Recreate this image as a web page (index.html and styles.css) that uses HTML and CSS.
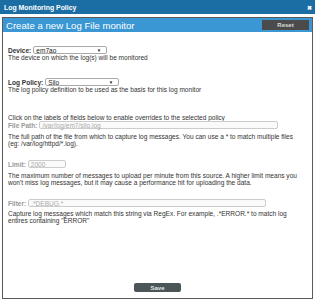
FILE: index.html
```html
<!DOCTYPE html>
<html lang="en">
<head>
    <meta charset="UTF-8">
    <title>Log Monitoring Policy</title>
    <link rel="stylesheet" href="styles.css">
</head>
<body>
    <div class="dialog">
        <div class="dialog-title">
            <span>Log Monitoring Policy</span>
            <span class="close">&#10006;</span>
        </div>

        <div class="panel">
            <div class="panel-header">
                <h1>Create a new Log File monitor</h1>
                <button class="btn reset">Reset</button>
            </div>

            <div class="panel-body">
                <div class="field top first">
                    <div class="row">
                        <label>Device:</label>
                        <div class="select device">em7ao <span class="arrow">&#9660;</span></div>
                    </div>
                    <div class="desc">The device on which the log(s) will be monitored</div>
                </div>

                <div class="field top">
                    <div class="row">
                        <label>Log Policy:</label>
                        <div class="select policy">Silo <span class="arrow">&#9660;</span></div>
                    </div>
                    <div class="desc">The log policy definition to be used as the basis for this log monitor</div>
                </div>

                <div class="hint">Click on the labels of fields below to enable overrides to the selected policy</div>

                <div class="field">
                    <div class="row">
                        <label class="off">File Path:</label>
                        <div class="input path">/var/log/em7/silo.log</div>
                    </div>
                    <div class="desc gap">The full path of the file from which to capture log messages. You can use a * to match multiple files (eg: /var/log/httpd/*.log).</div>
                </div>

                <div class="field spaced">
                    <div class="row">
                        <label class="off">Limit:</label>
                        <div class="input limit">2000</div>
                    </div>
                    <div class="desc gap">The maximum number of messages to upload per minute from this source. A higher limit means you won't miss log messages, but it may cause a performance hit for uploading the data.</div>
                </div>

                <div class="field spaced">
                    <div class="row">
                        <label class="off">Filter:</label>
                        <div class="input filter">.*DEBUG.*</div>
                    </div>
                    <div class="desc gap-sm">Capture log messages which match this string via RegEx. For example, .*ERROR.* to match log entires containing "ERROR"</div>
                </div>

                <div class="footer">
                    <button class="btn save">Save</button>
                </div>
            </div>
        </div>
    </div>
</body>
</html>
```

FILE: styles.css
```css
body {
    margin: 0;
    font-family: "Liberation Sans", Arial, sans-serif;
    background: #fff;
}

.dialog {
    width: 315px;
    height: 300px;
    display: flex;
    flex-direction: column;
}

.dialog-title {
    height: 14px;
    background: #1b6ea3;
    color: #fff;
    font-size: 6.9px;
    font-weight: bold;
    display: flex;
    align-items: center;
    justify-content: space-between;
    padding: 0 3px 0 4px;
}

.close {
    font-size: 6px;
}

.panel {
    flex: 1;
    margin: 3px 2px 1px 2px;
    border: 1px solid #5a5a5a;
    display: flex;
    flex-direction: column;
}

.panel-header {
    height: 14px;
    background: #3a97d4;
    display: flex;
    align-items: center;
    justify-content: space-between;
    padding: 0 3px 0 3px;
}

.panel-header h1 {
    margin: 0;
    font-size: 9.6px;
    font-weight: normal;
    color: #fff;
}

.btn {
    border: none;
    font-family: "Liberation Sans", Arial, sans-serif;
    font-size: 6px;
    font-weight: bold;
    padding: 0;
}

.reset {
    width: 47px;
    height: 10px;
    background: #4b4b4b;
    color: #ddd;
}

.panel-body {
    flex: 1;
    padding: 0 13px 0 5px;
    display: flex;
    flex-direction: column;
    font-size: 6.55px;
    color: #333;
}

.row {
    display: flex;
    align-items: center;
    height: 8px;
}

label {
    font-weight: bold;
    color: #333;
    margin-right: 2px;
}

label.off {
    color: #999;
}

.field.first {
    margin-top: 14px;
}

.field.top + .field.top {
    margin-top: 17px;
}

.select {
    height: 8px;
    box-sizing: border-box;
    border: 1px solid #aaa;
    border-radius: 2px;
    background: #fff;
    color: #222;
    padding: 0 2px;
    display: flex;
    align-items: center;
    justify-content: space-between;
}

.select .arrow {
    font-size: 4.5px;
    margin-right: 3px;
}

.select.device {
    width: 74px;
}

.select.policy {
    width: 74px;
}

.input {
    height: 8px;
    box-sizing: border-box;
    border: 1px solid #ccc;
    border-radius: 2px;
    background: #fafafa;
    color: #aaa;
    padding: 0 2px;
    display: flex;
    align-items: center;
}

.input.path {
    width: 239px;
}

.input.limit {
    width: 38px;
}

.input.filter {
    width: 238px;
}

.desc {
    line-height: 7px;
}

.desc.gap {
    margin-top: 4px;
}

.desc.gap-sm {
    margin-top: 3px;
}

.hint {
    margin-top: 21px;
    line-height: 7px;
}

.field.spaced {
    margin-top: 13px;
}

.footer {
    margin-top: auto;
    display: flex;
    justify-content: center;
    padding: 0 0 6px 8px;
}

.save {
    width: 47px;
    height: 9px;
    background: #4c5658;
    color: #e8e8e8;
    border-radius: 2px;
}
```
